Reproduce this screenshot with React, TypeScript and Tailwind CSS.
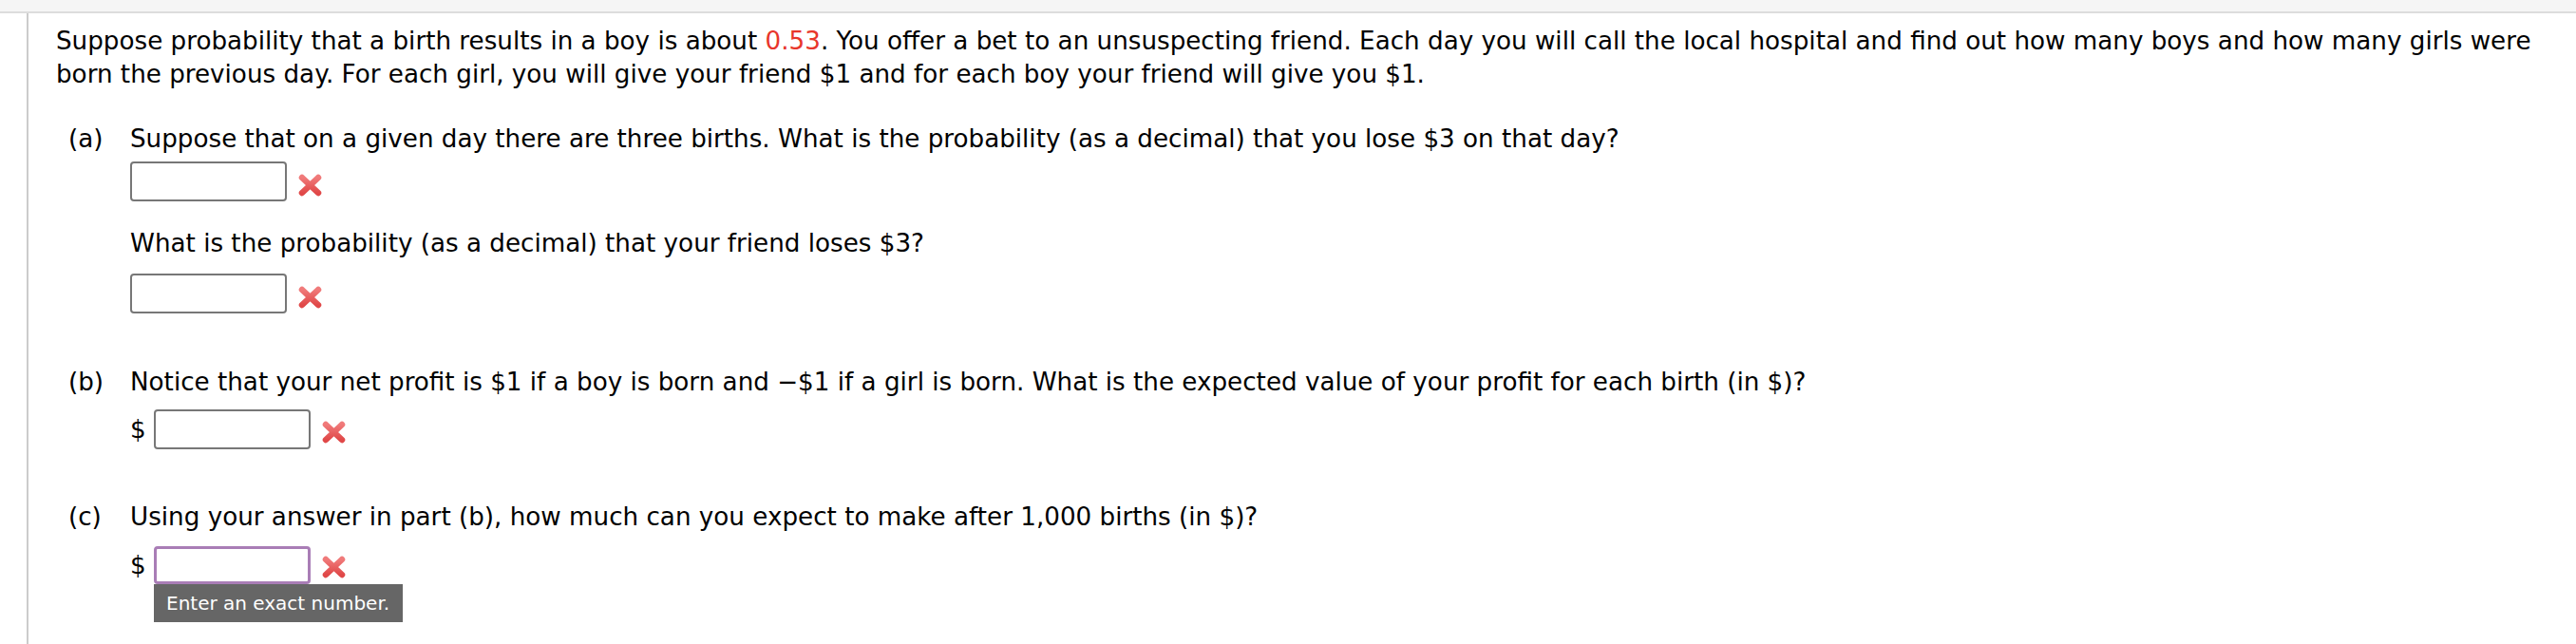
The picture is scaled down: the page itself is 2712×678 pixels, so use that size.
import React from "react";

function XMark() {
  return (
    <svg width="27" height="26" viewBox="0 0 27 26" className="shrink-0">
      <defs>
        <linearGradient id="xg" x1="0" y1="0" x2="0" y2="1">
          <stop offset="0" stopColor="#f07a7a" />
          <stop offset="1" stopColor="#e04848" />
        </linearGradient>
      </defs>
      <path d="M5 5 L22 21 M22 5 L5 21" stroke="url(#xg)" strokeWidth="6.5" strokeLinecap="round" fill="none" />
    </svg>
  );
}

function Box({ purple = false }: { purple?: boolean }) {
  return (
    <div
      className={
        purple
          ? "w-[165px] h-[40px] rounded-[4px] border-[3px] border-[#a97db6] bg-white"
          : "w-[165px] h-[42px] rounded-[4px] border-2 border-[#777777] bg-white"
      }
    />
  );
}

export default function App() {
  return (
    <div className="min-h-[678px] bg-white text-black font-['DejaVu_Sans','Liberation_Sans',sans-serif] text-[26.2px] leading-[35px]">
      <div className="h-[14px] bg-[#f5f5f5] border-b-2 border-[#dddddd]" />
      <div className="ml-[28px] border-l-2 border-[#cccccc] min-h-[664px] pl-[29px] pt-[12px]">
        <p className="whitespace-nowrap">
          Suppose probability that a birth results in a boy is about{" "}
          <span className="text-[#e8362b]">0.53</span>. You offer a bet to an unsuspecting friend. Each day you will call the local hospital and find out how many boys and how many girls were
          <br />
          born the previous day. For each girl, you will give your friend $1 and for each boy your friend will give you $1.
        </p>

        {/* (a) */}
        <div className="flex ml-[13px] mt-[33px]">
          <div className="w-[65px] shrink-0">(a)</div>
          <div className="flex flex-col">
            <div>Suppose that on a given day there are three births. What is the probability (as a decimal) that you lose $3 on that day?</div>
            <div className="flex items-center gap-[11px] mt-[6px]">
              <Box />
              <div className="mt-[8px]"><XMark /></div>
            </div>
            <div className="mt-[27px]">What is the probability (as a decimal) that your friend loses $3?</div>
            <div className="flex items-center gap-[11px] mt-[14px]">
              <Box />
              <div className="mt-[8px]"><XMark /></div>
            </div>
          </div>
        </div>

        {/* (b) */}
        <div className="flex ml-[13px] mt-[55px]">
          <div className="w-[65px] shrink-0">(b)</div>
          <div className="flex flex-col">
            <div>Notice that your net profit is $1 if a boy is born and −$1 if a girl is born. What is the expected value of your profit for each birth (in $)?</div>
            <div className="flex items-center mt-[11px]">
              <span className="w-[25px] shrink-0">$</span>
              <Box />
              <div className="ml-[11px] mt-[6px]"><XMark /></div>
            </div>
          </div>
        </div>

        {/* (c) */}
        <div className="flex ml-[13px] mt-[54px]">
          <div className="w-[65px] shrink-0">(c)</div>
          <div className="flex flex-col">
            <div>Using your answer in part (b), how much can you expect to make after 1,000 births (in $)?</div>
            <div className="flex items-center mt-[13px]">
              <span className="w-[25px] shrink-0">$</span>
              <div className="relative">
                <Box purple />
                <div className="absolute left-0 top-[40px] h-[40px] w-[262px] bg-[#666666] text-white text-[20px] leading-[40px] pl-[13px] whitespace-nowrap">
                  Enter an exact number.
                </div>
              </div>
              <div className="ml-[11px] mt-[4px]"><XMark /></div>
            </div>
          </div>
        </div>
      </div>
    </div>
  );
}
